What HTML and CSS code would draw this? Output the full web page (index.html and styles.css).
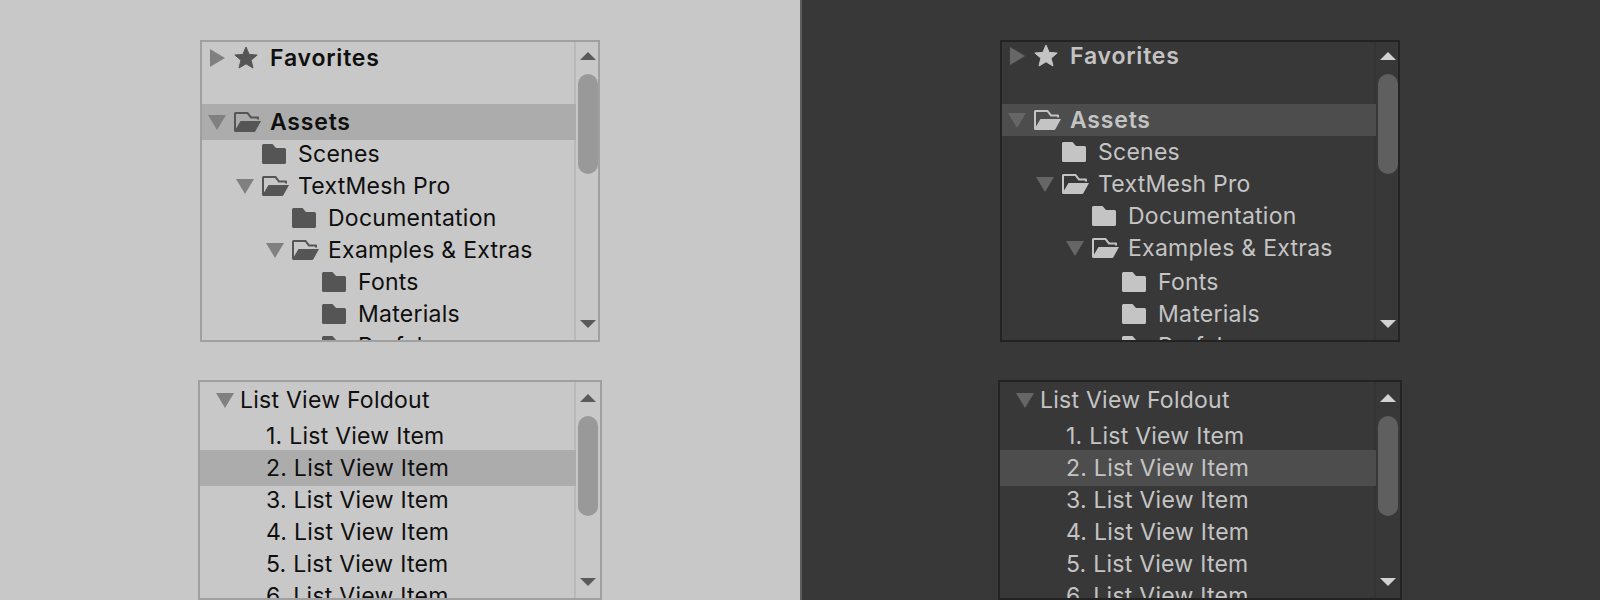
FILE: index.html
```html
<!DOCTYPE html>
<html lang="en">
<head>
    <meta charset="UTF-8">
    <title>Tree View and List View Themes</title>
    <link rel="stylesheet" href="styles.css">
</head>
<body>
    <svg class="icon-defs" width="0" height="0">
        <defs>
            <symbol id="tri-right" viewBox="0 0 15 18"><path d="M0 0 L15 9 L0 18 Z"/></symbol>
            <symbol id="tri-down" viewBox="0 0 18 15"><path d="M0 0 H18 L9 15 Z"/></symbol>
            <symbol id="scroll-up" viewBox="0 0 16 8"><path d="M8 0 L16 8 H0 Z"/></symbol>
            <symbol id="scroll-down" viewBox="0 0 16 8"><path d="M0 0 H16 L8 8 Z"/></symbol>
            <symbol id="star" viewBox="0 0 24 24"><path stroke-width="1" stroke-linejoin="round" d="M12 1 L15.2 8.4 L23.2 9 L17.1 14.2 L19 22 L12 17.8 L5 22 L6.9 14.2 L.8 9 L8.8 8.4 Z"/></symbol>
            <symbol id="folder" viewBox="0 0 24 20"><path d="M1.5 0 H10.5 L14 4 H22.5 A1.5 1.5 0 0 1 24 5.5 V18.5 A1.5 1.5 0 0 1 22.5 20 H1.5 A1.5 1.5 0 0 1 0 18.5 V1.5 A1.5 1.5 0 0 1 1.5 0 Z"/></symbol>
            <symbol id="folder-open" viewBox="0 0 27 20"><path d="M1.5 0 H14 L17.5 4.5 H24 A1 1 0 0 1 25 5.5 V7.5 H23 V6.5 H16.5 L13 2 H2 V16.5 L6.5 9 H27 L21.5 19 A1.6 1.6 0 0 1 20 20 H1.5 A1.5 1.5 0 0 1 0 18.5 V1.5 A1.5 1.5 0 0 1 1.5 0 Z"/></symbol>
        </defs>
    </svg>

    <!-- Light theme -->
    <section class="theme theme-light">
        <div class="panel tree-panel">
            <div class="viewport">
                <div class="row fav-row bold">
                    <svg class="arrow arrow-right"><use href="#tri-right"/></svg>
                    <span class="icon-cell"><svg class="star"><use href="#star"/></svg></span>
                    <span>Favorites</span>
                </div>
                <div class="row assets-row selected bold">
                    <svg class="arrow"><use href="#tri-down"/></svg>
                    <span class="icon-cell"><svg class="folder-open"><use href="#folder-open"/></svg></span>
                    <span>Assets</span>
                </div>
                <div class="row level-1">
                    <span class="arrow-gap"></span>
                    <span class="icon-cell"><svg class="folder"><use href="#folder"/></svg></span>
                    <span>Scenes</span>
                </div>
                <div class="row level-1">
                    <svg class="arrow"><use href="#tri-down"/></svg>
                    <span class="icon-cell"><svg class="folder-open"><use href="#folder-open"/></svg></span>
                    <span>TextMesh Pro</span>
                </div>
                <div class="row level-2">
                    <span class="arrow-gap"></span>
                    <span class="icon-cell"><svg class="folder"><use href="#folder"/></svg></span>
                    <span>Documentation</span>
                </div>
                <div class="row level-2">
                    <svg class="arrow"><use href="#tri-down"/></svg>
                    <span class="icon-cell"><svg class="folder-open"><use href="#folder-open"/></svg></span>
                    <span>Examples &amp; Extras</span>
                </div>
                <div class="row level-3 after-gap">
                    <span class="arrow-gap"></span>
                    <span class="icon-cell"><svg class="folder"><use href="#folder"/></svg></span>
                    <span>Fonts</span>
                </div>
                <div class="row level-3">
                    <span class="arrow-gap"></span>
                    <span class="icon-cell"><svg class="folder"><use href="#folder"/></svg></span>
                    <span>Materials</span>
                </div>
                <div class="row level-3">
                    <span class="arrow-gap"></span>
                    <span class="icon-cell"><svg class="folder"><use href="#folder"/></svg></span>
                    <span>Prefabs</span>
                </div>
            </div>
            <div class="scrollbar">
                <svg class="scroll-arrow"><use href="#scroll-up"/></svg>
                <div class="thumb"></div>
                <svg class="scroll-arrow scroll-end"><use href="#scroll-down"/></svg>
            </div>
        </div>

        <div class="panel list-panel">
            <div class="viewport">
                <div class="row foldout-row">
                    <svg class="arrow"><use href="#tri-down"/></svg>
                    <span>List View Foldout</span>
                </div>
                <div class="row item-row">1. List View Item</div>
                <div class="row item-row selected">2. List View Item</div>
                <div class="row item-row">3. List View Item</div>
                <div class="row item-row">4. List View Item</div>
                <div class="row item-row">5. List View Item</div>
                <div class="row item-row">6. List View Item</div>
            </div>
            <div class="scrollbar">
                <svg class="scroll-arrow"><use href="#scroll-up"/></svg>
                <div class="thumb"></div>
                <svg class="scroll-arrow scroll-end"><use href="#scroll-down"/></svg>
            </div>
        </div>
    </section>

    <!-- Dark theme -->
    <section class="theme theme-dark">
        <div class="panel tree-panel">
            <div class="viewport">
                <div class="row fav-row bold">
                    <svg class="arrow arrow-right"><use href="#tri-right"/></svg>
                    <span class="icon-cell"><svg class="star"><use href="#star"/></svg></span>
                    <span>Favorites</span>
                </div>
                <div class="row assets-row selected bold">
                    <svg class="arrow"><use href="#tri-down"/></svg>
                    <span class="icon-cell"><svg class="folder-open"><use href="#folder-open"/></svg></span>
                    <span>Assets</span>
                </div>
                <div class="row level-1">
                    <span class="arrow-gap"></span>
                    <span class="icon-cell"><svg class="folder"><use href="#folder"/></svg></span>
                    <span>Scenes</span>
                </div>
                <div class="row level-1">
                    <svg class="arrow"><use href="#tri-down"/></svg>
                    <span class="icon-cell"><svg class="folder-open"><use href="#folder-open"/></svg></span>
                    <span>TextMesh Pro</span>
                </div>
                <div class="row level-2">
                    <span class="arrow-gap"></span>
                    <span class="icon-cell"><svg class="folder"><use href="#folder"/></svg></span>
                    <span>Documentation</span>
                </div>
                <div class="row level-2">
                    <svg class="arrow"><use href="#tri-down"/></svg>
                    <span class="icon-cell"><svg class="folder-open"><use href="#folder-open"/></svg></span>
                    <span>Examples &amp; Extras</span>
                </div>
                <div class="row level-3 after-gap">
                    <span class="arrow-gap"></span>
                    <span class="icon-cell"><svg class="folder"><use href="#folder"/></svg></span>
                    <span>Fonts</span>
                </div>
                <div class="row level-3">
                    <span class="arrow-gap"></span>
                    <span class="icon-cell"><svg class="folder"><use href="#folder"/></svg></span>
                    <span>Materials</span>
                </div>
                <div class="row level-3">
                    <span class="arrow-gap"></span>
                    <span class="icon-cell"><svg class="folder"><use href="#folder"/></svg></span>
                    <span>Prefabs</span>
                </div>
            </div>
            <div class="scrollbar">
                <svg class="scroll-arrow"><use href="#scroll-up"/></svg>
                <div class="thumb"></div>
                <svg class="scroll-arrow scroll-end"><use href="#scroll-down"/></svg>
            </div>
        </div>

        <div class="panel list-panel">
            <div class="viewport">
                <div class="row foldout-row">
                    <svg class="arrow"><use href="#tri-down"/></svg>
                    <span>List View Foldout</span>
                </div>
                <div class="row item-row">1. List View Item</div>
                <div class="row item-row selected">2. List View Item</div>
                <div class="row item-row">3. List View Item</div>
                <div class="row item-row">4. List View Item</div>
                <div class="row item-row">5. List View Item</div>
                <div class="row item-row">6. List View Item</div>
            </div>
            <div class="scrollbar">
                <svg class="scroll-arrow"><use href="#scroll-up"/></svg>
                <div class="thumb"></div>
                <svg class="scroll-arrow scroll-end"><use href="#scroll-down"/></svg>
            </div>
        </div>
    </section>
</body>
</html>
```
FILE: styles.css
```css
/* General styles */
body {
    margin: 0;
    height: 600px;
    overflow: hidden;
    display: grid;
    grid-template-columns: 800px 800px;
    font-family: Inter, "Noto Sans", sans-serif;
    font-size: 23px;
    letter-spacing: 0.25px;
}

.icon-defs {
    position: absolute;
}

/* Theme colours */
.theme-light {
    --bg: #c8c8c8;
    --border: #a0a0a0;
    --divider: #b9b9b9;
    --selected: #acacac;
    --thumb: #999999;
    --text: #0f0f0f;
    --icon: #555555;
    --arrow: #808080;
    --scroll-arrow: #5a5a5a;
}

.theme-dark {
    --bg: #383838;
    --border: #232323;
    --divider: #333333;
    --selected: #4d4d4d;
    --thumb: #5f5f5f;
    --text: #c4c4c4;
    --icon: #c4c4c4;
    --arrow: #666666;
    --scroll-arrow: #d2d2d2;
    box-shadow: inset 2px 0 0 #5e5e5e;
}

.theme {
    background-color: var(--bg);
    color: var(--text);
    display: flex;
    flex-direction: column;
    align-items: center;
    gap: 38px;
    padding-top: 40px;
    box-sizing: border-box;
}

/* Panels */
.panel {
    display: flex;
    box-sizing: border-box;
    border: 2px solid var(--border);
    overflow: hidden;
}

.tree-panel {
    width: 400px;
    height: 302px;
}

.list-panel {
    width: 404px;
    height: 220px;
}

.viewport {
    flex-shrink: 0;
    overflow: hidden;
    box-shadow: inset -2px 0 0 var(--divider);
}

.tree-panel .viewport {
    width: 374px;
}

.list-panel .viewport {
    width: 376px;
}

/* Rows */
.row {
    display: flex;
    align-items: center;
    box-sizing: border-box;
    height: 32px;
    padding-left: 6px;
    white-space: nowrap;
}

.selected {
    background-color: var(--selected);
}

.bold {
    font-weight: 600;
    letter-spacing: 0.8px;
}

.level-1 {
    padding-left: 34px;
}

.level-2 {
    padding-left: 64px;
}

.level-3 {
    padding-left: 94px;
}

.fav-row {
    margin-bottom: 30px;
}

.assets-row {
    height: 36px;
    margin-bottom: -2px;
}

.theme-dark .fav-row {
    margin-top: -2px;
    margin-bottom: 32px;
}

.theme-dark .assets-row {
    height: 32px;
    margin-bottom: 0;
}

.theme-dark .after-gap {
    margin-top: 2px;
}

.foldout-row {
    height: 38px;
    padding-left: 16px;
    padding-bottom: 2px;
}

.foldout-row .arrow {
    margin-right: 6px;
}

.item-row {
    padding-left: 66px;
}

.item-row.selected {
    height: 36px;
    margin: -2px 0;
}

/* Icons */
.arrow {
    width: 18px;
    height: 15px;
    margin-right: 8px;
    flex-shrink: 0;
    fill: var(--arrow);
}

.arrow-right {
    width: 15px;
    height: 18px;
    margin-left: 2px;
    margin-right: 9px;
}

.arrow-gap {
    width: 26px;
    flex-shrink: 0;
}

.icon-cell {
    width: 36px;
    flex-shrink: 0;
    display: flex;
    align-items: center;
}

.star {
    width: 24px;
    height: 24px;
    fill: var(--icon);
    stroke: var(--icon);
}

.folder {
    width: 24px;
    height: 20px;
    fill: var(--icon);
}

.folder-open {
    width: 27px;
    height: 20px;
    fill: var(--icon);
}

/* Scrollbar */
.scrollbar {
    flex: 1;
    display: flex;
    flex-direction: column;
    padding: 10px 0 12px;
    box-sizing: border-box;
}

.list-panel .scrollbar {
    padding-top: 12px;
}

.scroll-arrow {
    width: 16px;
    height: 8px;
    margin-left: 4px;
    flex-shrink: 0;
    fill: var(--scroll-arrow);
}

.scroll-end {
    margin-top: auto;
}

.thumb {
    width: 20px;
    height: 100px;
    margin-top: 14px;
    margin-left: 2px;
    border-radius: 10px;
    background-color: var(--thumb);
}
```
